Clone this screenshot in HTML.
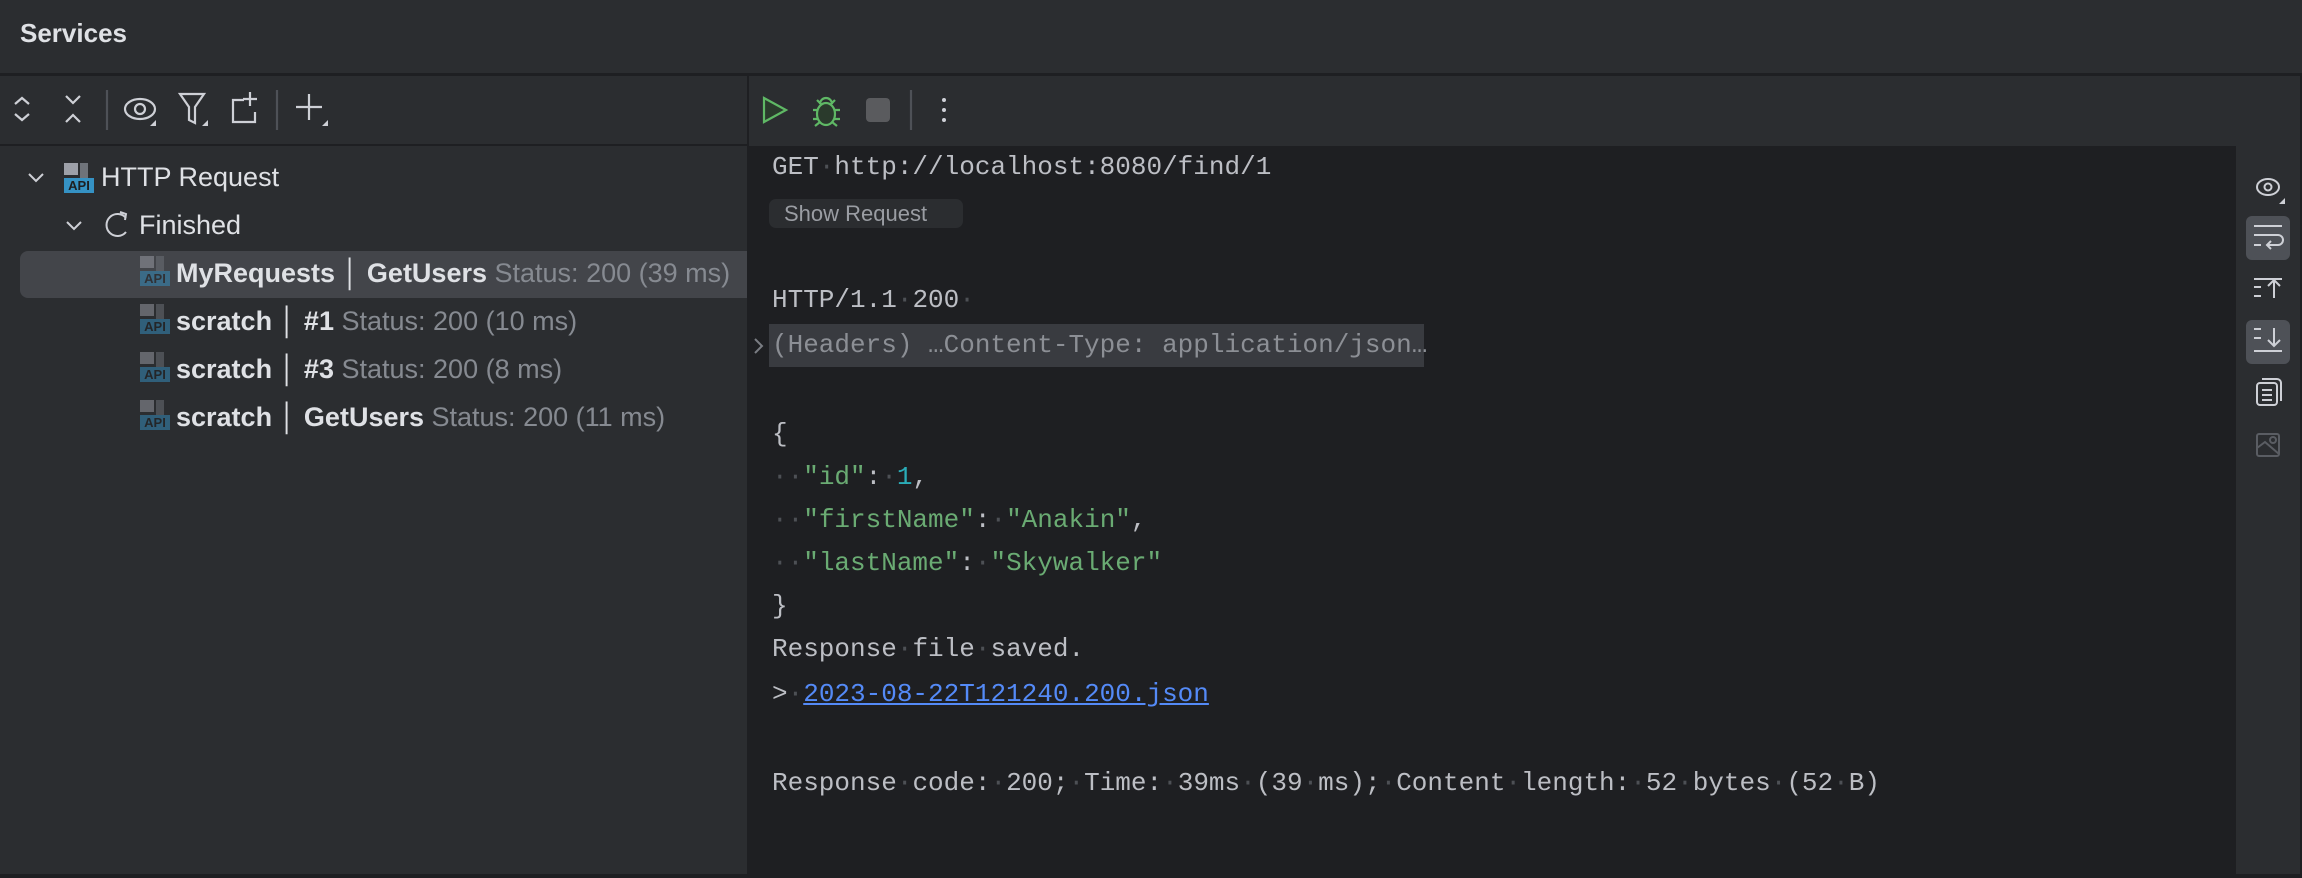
<!DOCTYPE html>
<html><head><meta charset="utf-8"><style>
*{margin:0;padding:0;box-sizing:border-box}
body{width:2302px;height:878px;background:#2b2d30;position:relative;overflow:hidden;font-family:"Liberation Sans",sans-serif;color:#dfe1e5}
.a{position:absolute}
.mono{font-family:"Liberation Mono",monospace;font-size:26px;color:#bcbec4;white-space:pre}
.d{color:#4d5055}
.g{color:#6aab73}
.n{color:#2aacb8}
.t{font-size:27px;white-space:nowrap}
.st{color:#868a91}
b{font-weight:bold}
.api{position:absolute;width:30px;height:30px}
.api i{position:absolute;left:0;top:0;width:14px;height:12px;background:#9da0a8}
.api s{position:absolute;left:16px;top:0;width:8px;height:16px;background:#6f737a}
.api u{position:absolute;left:0;top:15px;width:30px;height:15px;background:#3592c4;color:#1e1f22;font:bold 13px/15px "Liberation Sans",sans-serif;text-align:center;text-decoration:none}
.dim{opacity:.5}
</style></head><body>
<div class="a" style="left:20px;top:18px;font-size:26px;font-weight:bold;color:#dfe1e5">Services</div>
<div class="a" style="left:0;top:73px;width:2302px;height:3px;background:#1e1f22"></div>
<svg class="a" style="left:0;top:76px" width="747" height="68" fill="none" stroke="#ced0d6" stroke-width="2.2">
<path d="M15 28l7-6 7 6M15 38l7 6 7-6"/>
<path d="M66 20l7 7 7-7M66 46l7-7 7 7"/>
<line x1="107" y1="14" x2="107" y2="54" stroke="#4e5157"/>
<ellipse cx="140" cy="33" rx="15" ry="10"/><circle cx="140" cy="33" r="5"/>
<path d="M150 50h6v-6z" fill="#ced0d6" stroke="none"/>
<path d="M180 18h24l-9 13v16l-6-3v-13z"/>
<path d="M202 50h6v-6z" fill="#ced0d6" stroke="none"/>
<path d="M244 24h-11v22h22v-10M250 16v14M243 23h14"/>
<line x1="277" y1="14" x2="277" y2="54" stroke="#4e5157"/>
<path d="M309 18v26M296 31h26"/>
<path d="M322 50h6v-6z" fill="#ced0d6" stroke="none"/>
</svg>
<div class="a" style="left:0;top:144px;width:747px;height:2px;background:#1e1f22"></div>
<div class="a" style="left:747px;top:76px;width:2px;height:800px;background:#1e1f22"></div>
<div class="a" style="left:20px;top:251px;width:727px;height:47px;background:#43454a;border-radius:8px 0 0 8px"></div>
<svg class="a" style="left:0;top:146px" width="200" height="120" fill="none" stroke="#ced0d6" stroke-width="2">
<path d="M29 28l7 7 7-7"/><path d="M67 76l7 7 7-7"/>
<path d="M126 72a11 11 0 1 0 0 14M120 66l6 2-1 6"/>
</svg>
<div class="api" style="left:64px;top:163px"><i></i><s></s><u>API</u></div>
<div class="api dim" style="left:140px;top:256px"><i></i><s></s><u>API</u></div>
<div class="api dim" style="left:140px;top:304px"><i></i><s></s><u>API</u></div>
<div class="api dim" style="left:140px;top:352px"><i></i><s></s><u>API</u></div>
<div class="api dim" style="left:140px;top:400px"><i></i><s></s><u>API</u></div>
<div class="a t" style="left:101px;top:162px">HTTP Request</div>
<div class="a t" style="left:139px;top:210px">Finished</div>
<div class="a t" style="left:176px;top:258px"><b>MyRequests &#x2502; GetUsers</b> <span class="st">Status: 200 (39 ms)</span></div>
<div class="a t" style="left:176px;top:306px"><b>scratch &#x2502; #1</b> <span class="st">Status: 200 (10 ms)</span></div>
<div class="a t" style="left:176px;top:354px"><b>scratch &#x2502; #3</b> <span class="st">Status: 200 (8 ms)</span></div>
<div class="a t" style="left:176px;top:402px"><b>scratch &#x2502; GetUsers</b> <span class="st">Status: 200 (11 ms)</span></div>
<svg class="a" style="left:749px;top:76px" width="300" height="68" fill="none" stroke-width="2.2">
<path d="M15 22v24l22-12z" stroke="#5fb865" fill="#2a3a2c"/>
<ellipse cx="77" cy="38" rx="9" ry="11" stroke="#5fb865" fill="#2a3a2c"/><path d="M71 28a6 6 0 0 1 12 0M64 34h5M85 34h6M64 43h5M85 43h6M66 50l5-4M88 50l-5-4M68 24l4 4M86 24l-4 4" stroke="#5fb865"/>
<rect x="117" y="22" width="24" height="24" rx="4" fill="#5a5b5e"/>
<line x1="162" y1="14" x2="162" y2="54" stroke="#4e5157"/>
<circle cx="195" cy="24" r="2" fill="#ced0d6"/><circle cx="195" cy="34" r="2" fill="#ced0d6"/><circle cx="195" cy="44" r="2" fill="#ced0d6"/>
</svg>
<div class="a" style="left:749px;top:146px;width:1487px;height:728px;background:#1e1f22"></div>
<div class="a" style="left:769px;top:324px;width:655px;height:43px;background:#393b40"></div>
<div class="a" style="left:769px;top:199px;width:194px;height:29px;background:#2b2d30;border-radius:7px;color:#9a9da3;font-size:22px;padding:2px 0 0 15px">Show Request</div>
<div class="a mono" style="left:772px;top:152px">GET<span class="d">·</span>http://localhost:8080/find/1</div>
<div class="a mono" style="left:772px;top:285px">HTTP/1.1<span class="d">·</span>200<span class="d">·</span></div>
<svg class="a" style="left:750px;top:334px" width="16" height="24" fill="none" stroke="#7a7d83" stroke-width="2"><path d="M5 5l7 7-7 7"/></svg>
<div class="a mono" style="left:772px;top:330px;color:#8c8f95">(Headers) …Content-Type: application/json…</div>
<div class="a mono" style="left:772px;top:419px">{</div>
<div class="a mono" style="left:772px;top:462px"><span class="d">··</span><span class="g">"id"</span>:<span class="d">·</span><span class="n">1</span>,</div>
<div class="a mono" style="left:772px;top:505px"><span class="d">··</span><span class="g">"firstName"</span>:<span class="d">·</span><span class="g">"Anakin"</span>,</div>
<div class="a mono" style="left:772px;top:548px"><span class="d">··</span><span class="g">"lastName"</span>:<span class="d">·</span><span class="g">"Skywalker"</span></div>
<div class="a mono" style="left:772px;top:591px">}</div>
<div class="a mono" style="left:772px;top:634px">Response<span class="d">·</span>file<span class="d">·</span>saved.</div>
<div class="a mono" style="left:772px;top:679px">&gt;<span class="d">·</span><span style="color:#548af7;text-decoration:underline">2023-08-22T121240.200.json</span></div>
<div class="a mono" style="left:772px;top:768px">Response<span class="d">·</span>code:<span class="d">·</span>200;<span class="d">·</span>Time:<span class="d">·</span>39ms<span class="d">·</span>(39<span class="d">·</span>ms);<span class="d">·</span>Content<span class="d">·</span>length:<span class="d">·</span>52<span class="d">·</span>bytes<span class="d">·</span>(52<span class="d">·</span>B)</div>
<div class="a" style="left:2236px;top:146px;width:64px;height:728px;background:#2b2d30"></div>
<div class="a" style="left:2300px;top:76px;width:2px;height:800px;background:#1e1f22"></div>
<div class="a" style="left:2246px;top:216px;width:44px;height:44px;background:#4e5157;border-radius:6px"></div>
<div class="a" style="left:2246px;top:320px;width:44px;height:44px;background:#4e5157;border-radius:6px"></div>
<svg class="a" style="left:2236px;top:146px" width="64" height="330" fill="none" stroke="#ced0d6" stroke-width="2">
<ellipse cx="32" cy="41" rx="11" ry="8"/><circle cx="32" cy="41" r="3.5"/><path d="M43 58h6v-6z" fill="#ced0d6" stroke="none"/>
<path d="M18 80h28M18 89h24a5 5 0 0 1 0 10h-10M35 95l-4 4 4 4M18 99h7"/>
<path d="M18 133h28M18 141h7M18 150h7M38 152v-18M32 140l6-6 6 6"/>
<path d="M18 183h7M18 192h7M18 205h28M38 182v18M32 194l6 6 6-6"/>
<rect x="21" y="237" width="20" height="22" rx="3"/><path d="M26 233h15a4 4 0 0 1 4 4v18M26 244h10M26 249h10M26 254h10"/>
<g stroke="#5a5d63"><rect x="21" y="288" width="22" height="22" rx="2"/><path d="M21 302l8-6 14 12"/><circle cx="37" cy="294" r="3"/></g>
</svg>
<div class="a" style="left:0;top:874px;width:2302px;height:4px;background:#1e1f22"></div>
</body></html>
